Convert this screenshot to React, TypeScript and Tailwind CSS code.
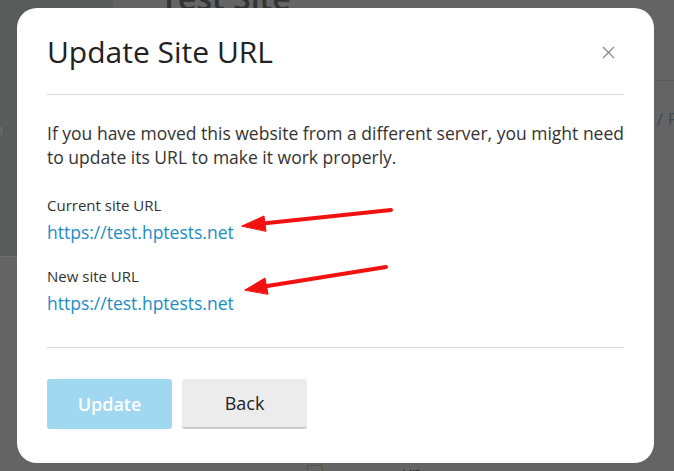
import React from "react";

const font = { fontFamily: '"Open Sans", "Noto Sans", sans-serif' };

function Backdrop() {
  // what is left visible of the page behind the dimmed overlay
  return (
    <div className="absolute inset-0 flex bg-[#646464]">
      <aside className="flex w-[113px] flex-col">
        <div className="h-[257px] overflow-hidden border-b border-[#6e6e6e] bg-[#585d5b] pt-[124px]">
          <span className="-ml-[14px] block text-[10px] text-[#7a7d7c]">ing!</span>
        </div>
      </aside>
      <main className="flex flex-1 flex-col">
        <div className="-mt-[26px] pl-[47px] text-[32px] font-semibold whitespace-nowrap text-[#333]">
          Test Site
        </div>
        <div className="flex justify-end pt-[58px]">
          <div className="w-[20px] border-t border-[#5a5a5a] pl-[3px] pt-[25px] text-[17px] whitespace-nowrap text-[#3c4a56]">
            / F
          </div>
        </div>
        <div className="mt-auto flex items-end gap-[80px] pl-[194px]">
          <div className="-mb-[4px] h-[10px] w-[16px] rounded-[2px] border border-[#4f5540]" />
          <div className="-mb-[14px] text-[17px] text-[#2a2a2a]">yp</div>
        </div>
      </main>
    </div>
  );
}

function Arrows() {
  return (
    <svg
      className="pointer-events-none absolute left-0 top-0"
      width="674"
      height="471"
      viewBox="0 0 674 471"
    >
      <g fill="#f21111" stroke="#f21111" strokeLinecap="round">
        <line x1="391" y1="210" x2="258" y2="224" strokeWidth="4" />
        <polygon points="242,226 264,216 266,231" strokeWidth="1" strokeLinejoin="round" />
        <line x1="386" y1="267" x2="261" y2="287" strokeWidth="4" />
        <polygon points="245,290 265,278 268,294" strokeWidth="1" strokeLinejoin="round" />
      </g>
    </svg>
  );
}

export default function App() {
  return (
    <div className="relative h-[471px] w-[674px] overflow-hidden" style={font}>
      <Backdrop />
      <div className="relative pl-[17px] pt-[8px]">
        <div className="w-[637px] rounded-[20px] bg-white px-[30px]">
          <div className="flex items-center justify-between border-b border-[#dadae2] pb-[24px] pt-[26px]">
            <h2 className="text-[30px] leading-[36px] text-[#222]">Update Site URL</h2>
            <button className="mr-[9px] text-[#8a8a8a]" aria-label="Close">
              <svg width="13" height="13" viewBox="0 0 13 13">
                <path d="M1 1L12 12M12 1L1 12" stroke="currentColor" strokeWidth="1.3" />
              </svg>
            </button>
          </div>

          <div className="border-b border-[#d4d4d8] pb-[32px] pt-[26px]">
            <p className="text-[17.5px] leading-[24px] whitespace-nowrap text-[#333]">
              If you have moved this website from a different server, you might need
              <br />
              to update its URL to make it work properly.
            </p>
            <div className="mt-[26px]">
              <p className="text-[15px] leading-[20px] text-[#333]">Current site URL</p>
              <a className="mt-[5px] block text-[17.5px] leading-[24px] text-[#1b8dc6]">
                https://test.hptests.net
              </a>
            </div>
            <div className="mt-[22px]">
              <p className="text-[15px] leading-[20px] text-[#333]">New site URL</p>
              <a className="mt-[5px] block text-[17.5px] leading-[24px] text-[#1b8dc6]">
                https://test.hptests.net
              </a>
            </div>
          </div>

          <div className="flex gap-[10px] pb-[34px] pt-[31px]">
            <button className="h-[50px] w-[125px] rounded-[3px] bg-[#a0d7f1] text-[18px] font-semibold text-white">
              Update
            </button>
            <button className="h-[50px] w-[125px] rounded-[3px] border-b-2 border-[#cbcbcb] bg-[#ececec] text-[18px] text-[#222]">
              Back
            </button>
          </div>
        </div>
      </div>
      <Arrows />
    </div>
  );
}
